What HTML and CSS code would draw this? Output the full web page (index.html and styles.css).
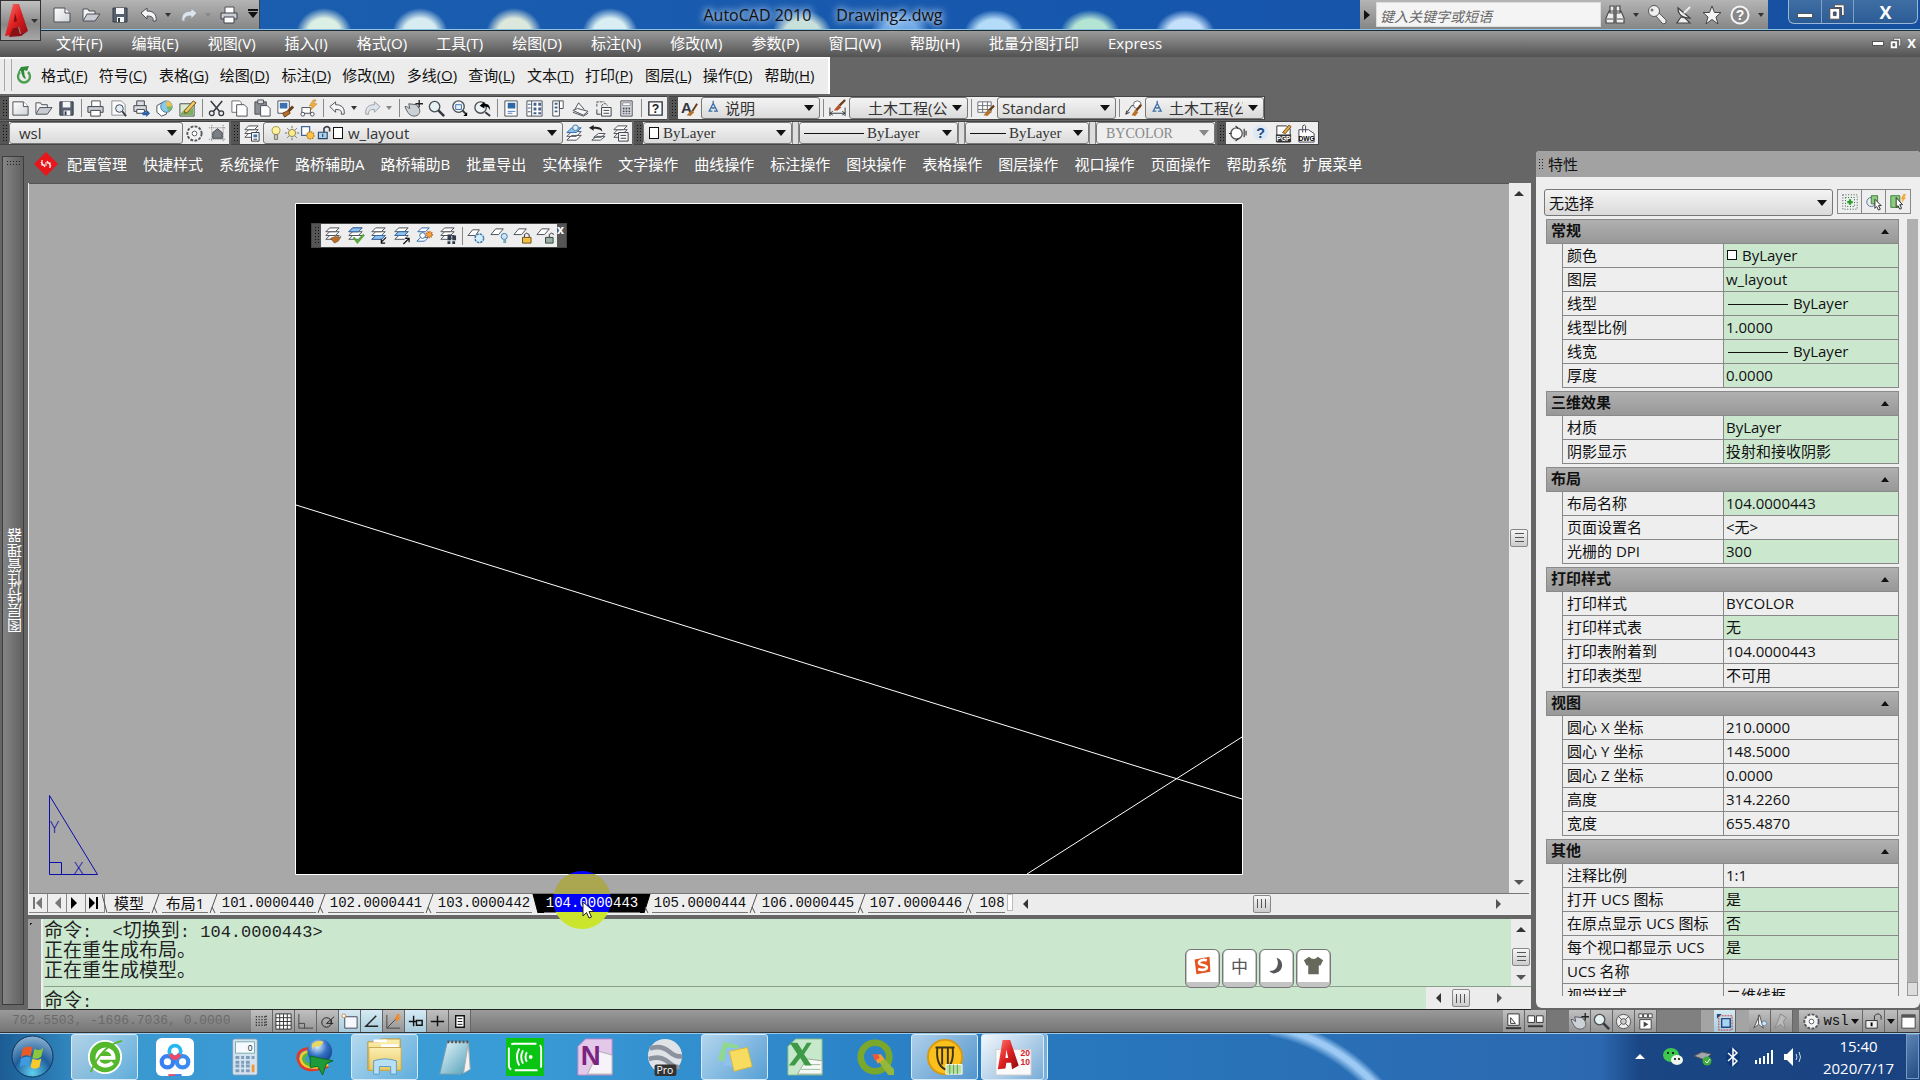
FILE: index.html
```html
<!DOCTYPE html>
<html lang="zh-CN">
<head>
<meta charset="utf-8">
<title>AutoCAD 2010 - Drawing2.dwg</title>
<link rel="stylesheet" href="styles.css">
</head>
<body>
<svg class="defs" aria-hidden="true">
<defs>
<linearGradient id="gRed" x1="0" y1="0" x2="1" y2="1"><stop offset="0" stop-color="#ff7a70"/><stop offset=".5" stop-color="#dd1f22"/><stop offset="1" stop-color="#8d0c10"/></linearGradient>
<linearGradient id="gPaper" x1="0" y1="0" x2="1" y2="1"><stop offset="0" stop-color="#fff"/><stop offset="1" stop-color="#cfd3d8"/></linearGradient>
<radialGradient id="gOrb" cx=".5" cy=".9" r=".9"><stop offset="0" stop-color="#5fd0f0"/><stop offset=".5" stop-color="#1f5f9c"/><stop offset="1" stop-color="#8fb4d2"/></radialGradient>
<radialGradient id="gGlobe" cx=".4" cy=".3" r=".8"><stop offset="0" stop-color="#dff0ff"/><stop offset=".5" stop-color="#2f6fc4"/><stop offset="1" stop-color="#123a80"/></radialGradient>
<linearGradient id="gFolder" x1="0" y1="0" x2="0" y2="1"><stop offset="0" stop-color="#fbeeb0"/><stop offset="1" stop-color="#e8c864"/></linearGradient>
<linearGradient id="gNote" x1="0" y1="0" x2="1" y2="1"><stop offset="0" stop-color="#e8f6fb"/><stop offset="1" stop-color="#4f9fb8"/></linearGradient>
</defs>
<symbol id="new" viewBox="0 0 20 20"><path d="M2 3h11l5 5v9H2z" fill="url(#gPaper)" stroke="#4a4e56"/><path d="M13 3v5h5" fill="#fff" stroke="#4a4e56"/></symbol>
<symbol id="open" viewBox="0 0 20 20"><path d="M2 15V4h5l1 2h6v3" fill="#f4f4f4" stroke="#4a4e56"/><path d="M2 16 6 9h13l-5 7z" fill="#c9ccd2" stroke="#4a4e56"/></symbol>
<symbol id="save" viewBox="0 0 20 20"><path d="M3 3h14v14H3z" fill="#56606e" stroke="#333a44"/><path d="M6 3h8v6H6zM7 12h7v5H7z" fill="#f4f6f8"/><path d="M8 13h2v4H8z" fill="#333a44"/></symbol>
<symbol id="print" viewBox="0 0 20 20"><path d="M6 8V2h9v6" fill="#fff" stroke="#4a4e56"/><path d="M2 8h16v6H2z" fill="#c9ccd2" stroke="#3c4048"/><path d="M5 12h10v6H5z" fill="#fff" stroke="#3c4048"/></symbol>
<symbol id="undo" viewBox="0 0 20 20"><path d="M2 8 8 3v3c6 0 10 3 9 10h-3c1-4-2-5-6-5v3z" fill="#f5f5f5" stroke="#4a4e56"/></symbol>
<symbol id="redo" viewBox="0 0 20 20"><path d="M18 8l-6-5v3C6 6 2 9 3 16h3c-1-4 2-5 6-5v3z" fill="#dde3ea" stroke="#9a9fa8"/></symbol>
<symbol id="preview" viewBox="0 0 20 20"><path d="M3 2h10l4 4v11H3z" fill="#fafafa" stroke="#8a8e94"/><circle cx="11" cy="10" r="4" fill="#e4eef6" stroke="#3c4048"/><path d="m14 13 4 5" stroke="#3c4048" stroke-width="2"/></symbol>
<symbol id="plot" viewBox="0 0 20 20"><path d="M5 7V2h8v5M2 7h13v6H2z" fill="#dadde2" stroke="#3c4048"/><path d="M5 11h8v4H5z" fill="#fff" stroke="#3c4048"/><path d="M11 14h4v-3l4 4-4 4v-2h-4z" fill="#2a5fa8"/></symbol>
<symbol id="web" viewBox="0 0 20 20"><path d="M2 7 9 3l3 3v10l-5 2-5-4z" fill="#fff" stroke="#4a4e56"/><circle cx="12" cy="8" r="6" fill="#8cc9e8" stroke="#4a7a9a"/><path d="M12 2a6 6 0 0 1 6 6h-6z" fill="#f2c14a"/><path d="M12 8h6a6 6 0 0 1-4 5z" fill="#7bb85a"/></symbol>
<symbol id="markup" viewBox="0 0 20 20"><path d="M2 5h15v13H2z" fill="#dcebd0" stroke="#4a4e56"/><path d="M3 15l5-5 3 3 5-4v8H3z" fill="#7fae60"/><path d="M7 12 16 2l3 2-9 10-3 1z" fill="#f0c860" stroke="#6b5020"/></symbol>
<symbol id="cut" viewBox="0 0 20 20"><path d="m4 2 9 11M16 2 7 13" stroke="#33373f" stroke-width="1.6"/><circle cx="5" cy="15" r="2.5" fill="none" stroke="#33373f" stroke-width="1.3"/><circle cx="15" cy="15" r="2.5" fill="none" stroke="#33373f" stroke-width="1.3"/></symbol>
<symbol id="copy" viewBox="0 0 20 20"><path d="M2 2h8l2 2v10H2z" fill="#fff" stroke="#6a6e74"/><path d="M7 6h8l3 3v9H7z" fill="#fff" stroke="#4a4e56"/></symbol>
<symbol id="paste" viewBox="0 0 20 20"><path d="M2 3h12v13H2z" fill="#8a8e94" stroke="#4a4e56"/><path d="M5 1h6v4H5z" fill="#ddd" stroke="#4a4e56"/><path d="M8 7h7l3 3v8H8z" fill="#fff" stroke="#4a4e56"/></symbol>
<symbol id="match" viewBox="0 0 20 20"><path d="M2 2h12v13H2z" fill="#fff" stroke="#4a4e56"/><path d="M4 4h8v6H4z" fill="#3a6fb0"/><path d="m18 8-5 5" stroke="#6b3d16" stroke-width="3"/><path d="m7 15 6-3 2 3-6 4z" fill="#b8702c" stroke="#6b3d16"/></symbol>
<symbol id="block" viewBox="0 0 20 20"><path d="M3 9h9v6H3z" fill="#fff" stroke="#4a4e56"/><circle cx="4" cy="16" r="2" fill="#fff" stroke="#4a4e56"/><circle cx="14" cy="16" r="2" fill="#fff" stroke="#4a4e56"/><path d="m15 1-4 6h3l-2 5 7-7h-4l3-4z" fill="#f6b83c" stroke="#b87818" stroke-width=".6"/></symbol>
<symbol id="hand" viewBox="0 0 20 20"><path d="M1 8c2-1 4 2 5 2l-1-5 8 1 3 4c2 4-1 8-5 8-5 0-7-3-10-10z" fill="#ccd1d6" stroke="#555a62"/><path d="M16 1v8M12 5h8" stroke="#222" stroke-width="1.4"/></symbol>
<symbol id="zoom" viewBox="0 0 20 20"><circle cx="8" cy="8" r="5.5" fill="#e4f2f2" stroke="#4a4e56" stroke-width="1.4"/><path d="m12 12 6 6" stroke="#33373f" stroke-width="2.6"/></symbol>
<symbol id="zoomw" viewBox="0 0 20 20"><circle cx="9" cy="8" r="6" fill="#eef4f6" stroke="#4a4e56" stroke-width="1.4"/><path d="M6 6h6v5H6z" fill="none" stroke="#3a6fb0"/><path d="m13 12 4 4" stroke="#33373f" stroke-width="2"/><path d="M18 14v4h-4z"/></symbol>
<symbol id="zoomp" viewBox="0 0 20 20"><circle cx="8" cy="9" r="6" fill="#eef4f6" stroke="#4a4e56" stroke-width="1.4"/><path d="m13 14 5 4" stroke="#33373f" stroke-width="2"/><path d="M7 7l5-4v2c5 0 6 3 6 7-1-3-3-4-6-4v2z"/></symbol>
<symbol id="props" viewBox="0 0 20 20"><path d="M3 2h13v16H3z" fill="#fff" stroke="#4a4e56"/><path d="M6 4h8v6H6z" fill="#2f66a8"/><path d="M6 13h8M6 15h5" stroke="#4a7ac0"/></symbol>
<symbol id="dc" viewBox="0 0 20 20"><path d="M2 2h16v16H2zM7 2v16" fill="#fff" stroke="#4a4e56"/><path d="M9 4h3v3H9zM14 4h3v3h-3zM9 9h3v3H9zM14 9h3v3h-3zM9 14h3v2H9zM14 14h3v2h-3zM3 5h3v1H3zM3 9h3v1H3zM3 13h3v1H3z" fill="#43618c"/></symbol>
<symbol id="tool" viewBox="0 0 20 20"><path d="M5 2h7v16H5zM12 2h4v8h-4z" fill="#fff" stroke="#4a4e56"/><path d="M7 4h3v2H7zM7 8h3v2H7zM7 12h3v2H7z" fill="#43618c"/></symbol>
<symbol id="sheet" viewBox="0 0 20 20"><path d="m4 11 4-7 6 7M2 12l5-2 11 3-5 4z" fill="#f6f6f6" stroke="#4a4e56"/><path d="m2 14 11 4 5-3" fill="none" stroke="#4a4e56"/></symbol>
<symbol id="mset" viewBox="0 0 20 20"><path d="M3 8V3h8M8 8c0-4 6-4 6-1" fill="none" stroke="#4a4e56" stroke-dasharray="3 1"/><path d="M8 9h10v9H8z" fill="#fff" stroke="#33373f"/><path d="M10 12h6M10 15h6M3 11v5h4" fill="none" stroke="#33373f"/></symbol>
<symbol id="calc" viewBox="0 0 20 20"><path d="M4 2h12v16H4z" fill="#e4e6ea" stroke="#4a4e56"/><path d="M6 4h8v3H6z" fill="#fff" stroke="#4a4e56" stroke-width=".6"/><path d="M6 9h2v2H6zM9 9h2v2H9zM12 9h2v2h-2zM6 12h2v2H6zM9 12h2v2H9zM12 12h2v2h-2zM6 15h2v1H6zM9 15h2v1H9zM12 15h2v1h-2z" fill="#4a4e56"/></symbol>
<symbol id="dstyle" viewBox="0 0 20 20"><path d="M2 9v9M18 9v9M2 15h16M5 13l-3 2 3 2M15 13l3 2-3 2" fill="none" stroke="#33373f"/><path d="m18 1-6 6" stroke="#6b3d16" stroke-width="2.4"/><path d="m6 12 5-6 3 3-4 3z" fill="#b8502c"/></symbol>
<symbol id="tbstyle" viewBox="0 0 20 20"><path d="M2 3h14v11H2zM2 7h14M2 11h14M7 3v11M12 3v11" fill="#fff" stroke="#6a6e74"/><path d="m19 7-5 5" stroke="#6b3d16" stroke-width="2.4"/><path d="m8 17 5-6 3 3-4 4z" fill="#b8702c"/></symbol>
<symbol id="mstyle" viewBox="0 0 20 20"><path d="m2 16 6-9M2 16l1-4M2 16l4-2M8 7h3" fill="none" stroke="#33373f"/><circle cx="14" cy="6" r="4" fill="#fff" stroke="#6a6e74"/><path d="m18 6-5 6" stroke="#6b3d16" stroke-width="2.4"/><path d="m8 17 4-6 3 3-3 4z" fill="#b8702c"/></symbol>
<symbol id="comp" viewBox="0 0 20 20"><path d="M9 1v3M9 4 4 14h4M9 4l5 10h-4M7 10h4" fill="none" stroke="#3a6fa8" stroke-width="1.6"/></symbol>
<symbol id="gear" viewBox="0 0 20 20"><circle cx="10" cy="10" r="7.500" fill="#f2f2f2" stroke="#555a62" stroke-width="2" stroke-dasharray="3 1.4"/><circle cx="10" cy="10" r="2.5" fill="#fff" stroke="#555a62"/></symbol>
<symbol id="wsset" viewBox="0 0 20 20"><path d="M1 4h18M1 16h18M4 1v18M16 1v18" stroke="#777" stroke-dasharray="1 1"/><path d="M5 15v-6l5-4 5 4v6z" fill="#7a7e86" stroke="#44484e"/></symbol>
<symbol id="layers" viewBox="0 0 20 20"><path d="M3 14h10l4-4H7z" fill="#fff" stroke="#4a4e56"/><path d="M3 10h10l4-4H7z" fill="#fff" stroke="#4a4e56"/><path d="M3 6h10l4-4H7z" fill="#fff" stroke="#4a4e56"/></symbol>
<symbol id="laymgr" viewBox="0 0 20 20"><use href="#layers"/><path d="M10 9h8v9h-8z" fill="#fff" stroke="#33373f"/><path d="M12 11h4v3h-4z" fill="#3a6fb0"/><path d="M12 16h4" stroke="#33373f"/></symbol>
<symbol id="laycur" viewBox="0 0 20 20"><path d="M2 17h10l5-5H7zM2 13h10l5-5H7z" fill="#fff" stroke="#4a4e56"/><path d="M2 9h10l5-5H7z" fill="#8fc3ee" stroke="#2f66a8"/><circle cx="11" cy="4" r="3" fill="#d8eaf8" stroke="#3a7a9a"/></symbol>
<symbol id="layprev" viewBox="0 0 20 20"><path d="M4 17h9l5-4H9zM6 14h8l4-4h-7z" fill="#fff" stroke="#4a4e56"/><path d="M1 4l5-3v2c6 0 9 1 9 5-2-2-4-3-9-3v2z" fill="#222"/></symbol>
<symbol id="laystate" viewBox="0 0 20 20"><use href="#layers"/><path d="M8 9h10v9H8z" fill="#fff" stroke="#33373f"/><path d="M10 12h6M10 15h6" stroke="#33373f"/></symbol>
<symbol id="laybrush" viewBox="0 0 20 20"><use href="#layers"/><path d="m8 13 5-2 4 1 2-1-3 5-4 2z" fill="#b8702c" stroke="#6b3d16" stroke-width=".6"/></symbol>
<symbol id="laycheck" viewBox="0 0 20 20"><use href="#layers"/><path d="M3 6h10l4-4H7z" fill="#8fc3ee" stroke="#2f66a8"/><path d="m8 12 4 5 7-8" fill="none" stroke="#58a83c" stroke-width="2.4"/></symbol>
<symbol id="layin" viewBox="0 0 20 20"><use href="#layers"/><path d="M3 14h10l4-4H7z" fill="#8fc3ee" stroke="#2f66a8"/><path d="m18 12-5 5M13 14v4h4" fill="none" stroke="#111" stroke-width="1.3"/></symbol>
<symbol id="layout" viewBox="0 0 20 20"><use href="#layers"/><path d="M3 10h10l4-4H7z" fill="#8fc3ee" stroke="#2f66a8"/><path d="m12 19 6-6M14 13h4v4" fill="none" stroke="#111" stroke-width="1.3"/></symbol>
<symbol id="laysun" viewBox="0 0 20 20"><path d="M2 16h8l4-4H6zM3 6h8l4-4H7z" fill="#fff" stroke="#2f66a8"/><circle cx="8" cy="10" r="3" fill="#fff" stroke="#2f66a8"/><circle cx="15" cy="9" r="3" fill="#f6a83c" stroke="#b8602c" stroke-dasharray="1 1" stroke-width="2"/></symbol>
<symbol id="laywalk" viewBox="0 0 20 20"><use href="#layers"/><path d="M10 9h4v6h-4zM15 10h4v5h-4zM10 16h3v3h-3zM15 16h3v3h-3z" fill="#2f3b4c"/></symbol>
<symbol id="layfrz" viewBox="0 0 20 20"><path d="M1 10h8l4-6H6z" fill="#fff" stroke="#4a4e56"/><circle cx="13" cy="13" r="4.5" fill="#d8eefc" stroke="#3a7ab0" stroke-width="1.6" stroke-dasharray="2.5 1"/></symbol>
<symbol id="layoff" viewBox="0 0 20 20"><path d="M1 9h8l5-6H6z" fill="#fff" stroke="#4a4e56"/><circle cx="15" cy="11" r="3.2" fill="#cfe4f8" stroke="#3a7ab0"/><path d="M14 14h3v4h-3z" fill="#7aa" /></symbol>
<symbol id="laylock" viewBox="0 0 20 20"><path d="M1 9h8l5-6H6z" fill="#fff" stroke="#4a4e56"/><path d="M12 12V9q2-3 5 0v3" fill="none" stroke="#333"/><path d="M10 12h9v6h-9z" fill="#f0c040" stroke="#6b5020"/></symbol>
<symbol id="layunl" viewBox="0 0 20 20"><path d="M1 9h8l5-6H6z" fill="#fff" stroke="#4a4e56"/><path d="M14 12V9q2-3 5 0" fill="none" stroke="#333"/><path d="M10 12h8v6h-8z" fill="#9ab0a4" stroke="#33433c"/></symbol>
<symbol id="bulb" viewBox="0 0 20 20"><circle cx="10" cy="7" r="5" fill="#fdf3a0" stroke="#9a8430"/><path d="M8 12h4v6H8z" fill="#c8c8b0" stroke="#666"/></symbol>
<symbol id="sun" viewBox="0 0 20 20"><circle cx="10" cy="10" r="4.5" fill="#fbe98a" stroke="#77703a"/><path d="M10 1v3M10 16v3M1 10h3M16 10h3M4 4l2 2M14 14l2 2M16 4l-2 2M6 14l-2 2" stroke="#555"/></symbol>
<symbol id="vpfrz" viewBox="0 0 20 20"><path d="M2 2h10v11H2z" fill="#fff" stroke="#44659a" stroke-width="1.6"/><circle cx="13" cy="13" r="4.5" fill="#fbc34a" stroke="#b87818" stroke-dasharray="2 1" stroke-width="1.5"/></symbol>
<symbol id="unlock" viewBox="0 0 20 20"><path d="M10 9V4q4-4 7 0v4" fill="none" stroke="#333a44" stroke-width="2"/><path d="M3 9h11v8H3z" fill="#a8d4f4" stroke="#2a4460" stroke-width="1.4"/><path d="M8 11h1v4H8z"/></symbol>
<symbol id="binoc" viewBox="0 0 20 20"><path d="M5 1h4v7H5zM11 1h4v7h-4zM4 6h5v12H1v-5zM11 6h5l3 7v5h-8z" fill="#eee" stroke="#4a4a4a" stroke-width="1.2"/><path d="M2 14h6M12 14h6" stroke="#4a4a4a"/></symbol>
<symbol id="key" viewBox="0 0 20 20"><path d="m8 10 8 9 3-1v-3l-8-8z" fill="#f0f0f0" stroke="#555"/><circle cx="7" cy="6" r="5.500" fill="#f0f0f0" stroke="#555"/><circle cx="5" cy="5" r="1.5" fill="#777"/></symbol>
<symbol id="dish" viewBox="0 0 20 20"><path d="M4 3c0 7 5 10 12 10z" fill="#f0f0f0" stroke="#444" stroke-width="1.3"/><path d="m10 8 6-6" fill="none" stroke="#eee" stroke-width="2"/><path d="M7 12l-4 6h13l-5-5z" fill="#eee" stroke="#444" stroke-width="1.2"/></symbol>
<symbol id="star" viewBox="0 0 20 20"><path d="m10 1 2.5 6.500H19l-5 4.500 2 7-6-4.500L4 19l2-7-5-4.500h6.500z" fill="#f4f4f4" stroke="#444"/></symbol>
<symbol id="restore" viewBox="0 0 20 20"><path d="M7 2h11v12h-3V5H7zM2 6h11v12H2zm4 4v4h3v-4z" fill="#fff" stroke="#444" fill-rule="evenodd"/></symbol>
<symbol id="lisp" viewBox="0 0 20 20"><circle cx="9" cy="10" r="6" fill="#fff" stroke="#555" stroke-width="1.4"/><path d="M1 10h3M8 2l3 3M17 5v9M19 7v5M8 18l3-3" stroke="#333" stroke-width="1.2"/></symbol>
<symbol id="cursor" viewBox="0 0 12 18"><path d="M1 1v14l3.500-3.500L7 17l2.500-1L7 10.500h5z" fill="#fff" stroke="#222"/></symbol>
</svg>

<div class="app">
<header class="title">
  <button class="appbtn" aria-label="应用程序菜单"><svg viewBox="0 0 40 40"><path d="M12 3h6l9 27-7 3-2-7-6 1-1 7-7 1z" fill="url(#gRed)"/><path d="m14 12 2 8-3 1z" fill="#7a0c10"/><path d="M12 27l5-1 2 7 8-3-7 5-12 1z" fill="#8a1014"/><path d="M30 18h7l-3.500 4z" fill="#333"/></svg></button>
  <div class="qat">
    <button aria-label="新建"><svg><use href="#new"/></svg></button><button aria-label="打开"><svg><use href="#open"/></svg></button><button aria-label="保存"><svg><use href="#save"/></svg></button><button aria-label="放弃"><svg><use href="#undo"/></svg></button><i class="dd"></i><button aria-label="重做"><svg><use href="#redo"/></svg></button><i class="dd dim"></i><button aria-label="打印"><svg><use href="#print"/></svg></button><i class="dd bar"></i>
  </div>
  <h1><span>AutoCAD 2010</span><span>Drawing2.dwg</span></h1>
  <div class="info">
    <i class="play"></i><input type="text" aria-label="搜索" placeholder="键入关键字或短语">
    <div class="infoicons"><svg><use href="#binoc"/></svg><i class="dd"></i><svg><use href="#key"/></svg><svg><use href="#dish"/></svg><svg><use href="#star"/></svg><svg viewBox="0 0 20 20"><circle cx="10" cy="10" r="8.500" fill="#888" stroke="#f4f4f4" stroke-width="2"/><text x="10" y="15" text-anchor="middle" font-size="14" font-weight="bold" font-family="Liberation Sans" fill="#fff">?</text></svg><i class="dd"></i></div>
  </div>
  <div class="winbtns"><button aria-label="最小化"><i class="minus"></i></button><button aria-label="还原"><svg><use href="#restore"/></svg></button><button aria-label="关闭" class="close">X</button></div>
</header>

<nav class="menubar">
  <a href="#">文件(F)</a><a href="#">编辑(E)</a><a href="#">视图(V)</a><a href="#">插入(I)</a><a href="#">格式(O)</a><a href="#">工具(T)</a><a href="#">绘图(D)</a><a href="#">标注(N)</a><a href="#">修改(M)</a><a href="#">参数(P)</a><a href="#">窗口(W)</a><a href="#">帮助(H)</a><a href="#">批量分图打印</a><a href="#">Express</a>
  <div class="docbtns"><i class="minus"></i><svg><use href="#restore"/></svg><b>X</b></div>
</nav>

<nav class="plugbar">
  <i class="rail"></i>
  <svg class="pluglogo" viewBox="0 0 18 20"><path d="M13 7a6 6 0 1 1-8 0" fill="none" stroke="#4f9f53" stroke-width="2.400"/><path d="M6 2l8-1-2 5-3-1q0 5 2 9-4-1-5-8l-3 1z" fill="#2f8a3a"/></svg>
  <a href="#">格式(<u>F</u>)</a><a href="#">符号(<u>C</u>)</a><a href="#">表格(<u>G</u>)</a><a href="#">绘图(<u>D</u>)</a><a href="#">标注(<u>D</u>)</a><a href="#">修改(<u>M</u>)</a><a href="#">多线(<u>O</u>)</a><a href="#">查询(<u>L</u>)</a><a href="#">文本(<u>T</u>)</a><a href="#">打印(<u>P</u>)</a><a href="#">图层(<u>L</u>)</a><a href="#">操作(<u>D</u>)</a><a href="#">帮助(<u>H</u>)</a>
</nav>

<div class="toolrow">
  <div class="tb"><i class="grip"></i><button><svg><use href="#new"/></svg></button><button><svg><use href="#open"/></svg></button><button><svg><use href="#save"/></svg></button><i class="sep"></i><button><svg><use href="#print"/></svg></button><button><svg><use href="#preview"/></svg></button><button><svg><use href="#plot"/></svg></button><button><svg><use href="#web"/></svg></button><button><svg><use href="#markup"/></svg></button><i class="sep"></i><button><svg><use href="#cut"/></svg></button><button><svg><use href="#copy"/></svg></button><button><svg><use href="#paste"/></svg></button><button><svg><use href="#match"/></svg></button><button><svg><use href="#block"/></svg></button><i class="sep"></i><button><svg><use href="#undo"/></svg></button><i class="dd"></i><button><svg><use href="#redo"/></svg></button><i class="dd dim"></i><i class="sep"></i><button><svg><use href="#hand"/></svg></button><button><svg><use href="#zoom"/></svg></button><button><svg><use href="#zoomw"/></svg></button><button><svg><use href="#zoomp"/></svg></button><i class="sep"></i><button><svg><use href="#props"/></svg></button><button><svg><use href="#dc"/></svg></button><button><svg><use href="#tool"/></svg></button><button><svg><use href="#sheet"/></svg></button><button><svg><use href="#mset"/></svg></button><button><svg><use href="#calc"/></svg></button><i class="sep"></i><button><svg viewBox="0 0 20 20"><path d="M3 3h14v14H3z" fill="#fff" stroke="#33373f" stroke-width="1.5"/><text x="10" y="15" text-anchor="middle" font-size="13" font-weight="bold" font-family="Liberation Sans" fill="#222">?</text></svg></button></div>
  <div class="tb"><i class="grip"></i><button><svg viewBox="0 0 20 20"><text x="1" y="15" font-size="16" font-weight="bold" font-family="Liberation Sans" fill="#33373f">A</text><path d="m18 5-5 8" stroke="#6b3d16" stroke-width="2"/><path d="m7 17 5-5 3 2-4 4z" fill="#b8702c"/></svg></button><div class="combo w120"><svg><use href="#comp"/></svg><select aria-label="文字样式"><option>说明</option></select></div><i class="sep"></i><button><svg><use href="#dstyle"/></svg></button><div class="combo w120 in"><select aria-label="标注样式"><option>土木工程(公制)</option></select></div><i class="sep"></i><button><svg><use href="#tbstyle"/></svg></button><div class="combo w120"><select aria-label="表格样式"><option>Standard</option></select></div><i class="sep"></i><button><svg><use href="#mstyle"/></svg></button><div class="combo w120"><svg><use href="#comp"/></svg><select aria-label="多重引线样式"><option>土木工程(公制)</option></select></div></div>
</div>
<div class="toolrow second">
  <div class="tb"><i class="grip"></i><div class="combo w174"><select class="pad" aria-label="工作空间"><option>wsl</option></select></div><button><svg><use href="#gear"/></svg></button><button><svg><use href="#wsset"/></svg></button></div>
  <div class="tb"><i class="grip"></i><button><svg><use href="#laymgr"/></svg></button><div class="combo w300 tight"><svg><use href="#bulb"/></svg><svg><use href="#sun"/></svg><svg><use href="#vpfrz"/></svg><svg><use href="#unlock"/></svg><i class="sw"></i><select aria-label="图层"><option>w_layout</option></select></div><button><svg><use href="#laycur"/></svg></button><button><svg><use href="#layprev"/></svg></button><button><svg><use href="#laystate"/></svg></button></div>
  <div class="tb serif"><i class="grip"></i><div class="combo w149"><i class="sw"></i><select aria-label="颜色"><option>ByLayer</option></select></div><i class="sep2"></i><div class="combo w160"><i class="ln60"></i><select aria-label="线型"><option>ByLayer</option></select></div><i class="sep2"></i><div class="combo w124"><i class="ln36"></i><select aria-label="线宽"><option>ByLayer</option></select></div><i class="sep2"></i><div class="combo w120 off"><select disabled aria-label="打印样式"><option>BYCOLOR</option></select></div></div>
  <div class="tb"><i class="grip"></i><button><svg><use href="#lisp"/></svg></button><button><svg viewBox="0 0 20 20"><circle cx="10" cy="9" r="8" fill="#dce8f4"/><text x="10" y="15" text-anchor="middle" font-size="15" font-weight="bold" font-family="Liberation Sans" fill="#234a80">?</text></svg></button><button><svg viewBox="0 0 20 20"><path d="M3 2h10l4 3v14H3z" fill="#fff" stroke="#333"/><path d="M2 11h16v8H2z" fill="#333"/><text x="10" y="18" text-anchor="middle" font-size="7" font-weight="bold" font-family="Liberation Sans" fill="#fff">PGP</text><path d="m9 9 7-8 2 2-6 7z" fill="#e8a840" stroke="#6b5020"/></svg></button><button><svg viewBox="0 0 20 20"><path d="M2 6h10l6 4v9H2zM6 9V2q2-2 3 0v7" fill="#fff" stroke="#445"/><text x="10" y="18" text-anchor="middle" font-size="7" font-weight="bold" font-family="Liberation Sans">DWG</text></svg></button></div>
</div>

<div class="middle">
  <aside class="palette"><i class="dots"></i><span>图层特性管理器</span></aside>
  <div class="center">
    <nav class="custom">
      <svg viewBox="0 0 24 24"><path d="m12 0 12 12-12 12L0 12z" fill="#e8151b"/><path d="M8 8v5l5 0M7 10l4 5M16 16v-5h-5M17 14l-4-5" fill="none" stroke="#fff" stroke-width="1.200"/></svg>
      <a href="#">配置管理</a><a href="#">快捷样式</a><a href="#">系统操作</a><a href="#">路桥辅助A</a><a href="#">路桥辅助B</a><a href="#">批量导出</a><a href="#">实体操作</a><a href="#">文字操作</a><a href="#">曲线操作</a><a href="#">标注操作</a><a href="#">图块操作</a><a href="#">表格操作</a><a href="#">图层操作</a><a href="#">视口操作</a><a href="#">页面操作</a><a href="#">帮助系统</a><a href="#">扩展菜单</a>
    </nav>
    <section class="drawing">
      <div class="view">
        <div class="canvas">
          <svg viewBox="1 0 1480 711" preserveAspectRatio="xMinYMin slice">
            <path d="M267.500 19.500h947v671h-947z" fill="#000" stroke="#fff"/>
            <path d="m268 321 946 294M999 690l215-137" stroke="#fff" fill="none"/>
            <path d="M21.500 611.500v79h48zM21.500 678.500h12v12" stroke="#0d0dab" fill="none"/>
            <g fill="#0d0dab" font-family="Open Sans" font-weight="300" font-size="17"><text x="22" y="649">Y</text><text x="46" y="690">X</text></g>
          </svg>
          <div class="floatbar"><i class="grip"></i><button><svg><use href="#laybrush"/></svg></button><button><svg><use href="#laycheck"/></svg></button><button><svg><use href="#layin"/></svg></button><button><svg><use href="#layout"/></svg></button><button><svg><use href="#laysun"/></svg></button><button><svg><use href="#laywalk"/></svg></button><i class="sep"></i><button><svg><use href="#layfrz"/></svg></button><button><svg><use href="#layoff"/></svg></button><button><svg><use href="#laylock"/></svg></button><button><svg><use href="#layunl"/></svg></button><b>x</b></div>
        </div>
        <div class="vscroll"><i class="up"></i><i class="thumb v"></i><i class="down"></i></div>
      </div>
      <div class="tabrow">
        <div class="nav"><button aria-label="第一个"><svg viewBox="0 0 18 18"><path d="M5 3v12" stroke="#777" stroke-width="2"/><path d="M13 3v12L7 9z" fill="#777"/></svg></button><button aria-label="上一个"><svg viewBox="0 0 18 18"><path d="M13 3v12L7 9z" fill="#777"/></svg></button><button aria-label="下一个"><svg viewBox="0 0 18 18"><path d="M4 3v12l6-6z"/></svg></button><button aria-label="最后一个"><svg viewBox="0 0 18 18"><path d="M3 3v12l6-6z"/><path d="M11 3v12" stroke="#000" stroke-width="2"/></svg></button></div>
        <div class="tabs">
          <svg class="sl first"><path d="m0 0 5 19"/></svg><button class="t1">模型</button><svg class="sl"><path d="M9 0 2 19M4 13l3 6"/></svg><button class="t2">布局1</button><svg class="sl"><path d="M9 0 2 19M4 13l3 6"/></svg><button>101.0000440</button><svg class="sl"><path d="M9 0 2 19M4 13l3 6"/></svg><button>102.0000441</button><svg class="sl"><path d="M9 0 2 19M4 13l3 6"/></svg><button>103.0000442</button><svg class="sl"><path d="M1 0h11v19H6z" class="blk"/></svg><button class="on"><span>104.0000443</span></button><svg class="sl"><path d="M0 0h10L4 19H0z" class="blk"/><path d="M5 13l3 6"/></svg><button>105.0000444</button><svg class="sl"><path d="M9 0 2 19M4 13l3 6"/></svg><button>106.0000445</button><svg class="sl"><path d="M9 0 2 19M4 13l3 6"/></svg><button>107.0000446</button><svg class="sl"><path d="M9 0 2 19M4 13l3 6"/></svg><button class="part">108</button>
        </div>
        <i class="split"></i>
        <div class="hscroll"><i class="left"></i><i class="thumb h"></i><i class="right"></i></div>
        <svg class="glow" viewBox="0 0 60 60"><defs><clipPath id="c"><circle cx="30" cy="30" r="29"/></clipPath></defs><g clip-path="url(#c)"><path d="M0 0h60v4H0z" fill="#00f"/><path d="M0 4h60v20H0z" fill="#aba650"/><path d="M0 24h60v18H0z" fill="#00f"/><path d="M0 42h60v18H0z" fill="#cbe52c"/></g></svg>
        <svg class="pointer"><use href="#cursor"/></svg>
      </div>
    </section>
    <section class="cmd">
      <i class="cmdgrip"></i>
      <div class="cmdmain">
        <div class="log">
          <div class="lines"><p>命令<kbd>:  &lt;</kbd>切换到<kbd>: 104.0000443&gt;</kbd></p><p>正在重生成布局。</p><p>正在重生成模型。</p></div>
          <div class="vscroll"><i class="up"></i><i class="thumb v"></i><i class="down"></i></div>
        </div>
        <div class="entry"><label for="cmd">命令<kbd>:</kbd></label><input id="cmd" type="text"><div class="hscroll"><i class="left"></i><i class="thumb h"></i><i class="right"></i></div></div>
      </div>
      <div class="ime">
        <button aria-label="搜狗输入法"><svg viewBox="0 0 24 24"><path d="m3 5 17-3 1 17-16 3z" fill="#e4541f"/><path d="M17 6c-4-1-9 0-9 3s9 2 9 5-6 4-10 2" fill="none" stroke="#fff" stroke-width="3"/></svg></button><button>中</button><button aria-label="半角"><svg viewBox="0 0 24 24"><path d="M12 3c9 2 9 17-3 18-2 0-4-1-5-3 8 1 12-8 8-15z" fill="#55575a"/></svg></button><button aria-label="皮肤"><svg viewBox="0 0 24 24"><path d="M7 2q5 5 10 0l6 4-3 6h-2v10H6V12H4L1 6z" fill="#66685c"/></svg></button>
      </div>
    </section>
  </div>
  <aside class="props">
    <h2><i class="dots"></i>特性</h2>
    <div class="pick"><div class="combo"><select aria-label="选择对象"><option>无选择</option></select></div><div class="pickbtns">
      <button aria-label="切换 PICKADD"><svg viewBox="0 0 20 20"><path d="M2 2h16v16H2z" fill="#e8f2e8" stroke="#334" stroke-dasharray="1 2"/><path d="M5 5h10v10H5z" fill="none" stroke="#334" stroke-dasharray="1 2"/><path d="M10 7v6M7 10h6" stroke="#2c9a2c" stroke-width="2.500"/></svg></button><button aria-label="选择对象"><svg viewBox="0 0 20 20"><circle cx="7" cy="10" r="5" fill="none" stroke="#4a6a9a"/><path d="M7 3h7v9H7z" fill="#8ccc7c" stroke="#3c7a3c"/><path d="M11 7v10l2-2 2 4 2-1-2-4h3z" fill="#fff" stroke="#222"/></svg></button><button aria-label="快速选择"><svg viewBox="0 0 20 20"><path d="M2 3h10v13H2z" fill="#8ccc7c" stroke="#3c7a3c"/><path d="M8 5v11l2-2 2 4 2-1-2-4h3z" fill="#fff" stroke="#222"/><path d="m16 1-3 6h2l-1 4 5-6h-2l2-4z" fill="#f6a83c"/></svg></button></div></div>
    <div class="plist">
      <div class="sections">
        <h3>常规</h3>
        <table><tr><th>颜色</th><td class="g"><i class="sw"></i>ByLayer</td></tr><tr><th>图层</th><td class="g">w_layout</td></tr><tr><th>线型</th><td class="g"><i class="ln60"></i>ByLayer</td></tr><tr><th>线型比例</th><td class="g">1.0000</td></tr><tr><th>线宽</th><td class="g"><i class="ln60"></i>ByLayer</td></tr><tr><th>厚度</th><td class="g">0.0000</td></tr></table>
        <h3>三维效果</h3>
        <table><tr><th>材质</th><td class="g">ByLayer</td></tr><tr><th>阴影显示</th><td class="g">投射和接收阴影</td></tr></table>
        <h3>布局</h3>
        <table><tr><th>布局名称</th><td class="g">104.0000443</td></tr><tr><th>页面设置名</th><td>&lt;无&gt;</td></tr><tr><th>光栅的 DPI</th><td class="g">300</td></tr></table>
        <h3>打印样式</h3>
        <table><tr><th>打印样式</th><td>BYCOLOR</td></tr><tr><th>打印样式表</th><td class="g">无</td></tr><tr><th>打印表附着到</th><td>104.0000443</td></tr><tr><th>打印表类型</th><td>不可用</td></tr></table>
        <h3>视图</h3>
        <table><tr><th>圆心 X 坐标</th><td>210.0000</td></tr><tr><th>圆心 Y 坐标</th><td>148.5000</td></tr><tr><th>圆心 Z 坐标</th><td>0.0000</td></tr><tr><th>高度</th><td>314.2260</td></tr><tr><th>宽度</th><td>655.4870</td></tr></table>
        <h3>其他</h3>
        <table><tr><th>注释比例</th><td>1:1</td></tr><tr><th>打开 UCS 图标</th><td class="g">是</td></tr><tr><th>在原点显示 UCS 图标</th><td class="g">否</td></tr><tr><th>每个视口都显示 UCS</th><td class="g">是</td></tr><tr><th>UCS 名称</th><td></td></tr><tr><th>视觉样式</th><td>二维线框</td></tr></table>
      </div>
      <div class="ptrack"><i></i></div>
    </div>
  </aside>
</div>

<footer class="status">
  <output>702.5503, -1696.7036, 0.0000</output>
  <div class="sbtns">
    <button><svg viewBox="0 0 20 20"><path d="M4 5h10M4 8h10M4 11h10M4 14h10M15 4v12" stroke="#111" stroke-width="1.500" stroke-dasharray="1 2"/></svg></button><button><svg viewBox="0 0 20 20"><path d="M2 2h16v16H2zM6 2v16M10 2v16M14 2v16M2 6h16M2 10h16M2 14h16" fill="#fff" stroke="#333"/></svg></button><button><svg viewBox="0 0 20 20"><path d="M3 2v15h15M3 12h6v5" fill="none" stroke="#444"/></svg></button><button><svg viewBox="0 0 20 20"><circle cx="9" cy="11" r="5" fill="none" stroke="#222"/><path d="M9 12h7M9 12l8-7M14 8v5" fill="none" stroke="#222"/></svg></button><button class="lit"><svg viewBox="0 0 20 20"><path d="M5 5h13v12H5z" fill="#f4f8fc" stroke="#445"/><circle cx="4" cy="4" r="2" fill="#fff" stroke="#c84"/></svg></button><button class="lit"><svg viewBox="0 0 20 20"><path d="M15 4 4 15h13" fill="none" stroke="#222" stroke-width="1.500"/></svg></button><button><svg viewBox="0 0 20 20"><path d="M3 3v14h14M3 17 13 7" fill="none" stroke="#444"/><path d="m14 2-3 6h2l-1 4 6-7h-3l2-3z" fill="#f08a2c"/></svg></button><button class="lit"><svg viewBox="0 0 20 20"><path d="M8 4v11M3 10h8M11 9h6v5h-6z" fill="none" stroke="#111" stroke-width="1.500"/></svg></button><button><svg viewBox="0 0 20 20"><path d="M10 4v11M3 10h14" stroke="#111" stroke-width="1.500"/></svg></button><button><svg viewBox="0 0 20 20"><path d="M6 4h9v12H6z" fill="#fff" stroke="#111" stroke-width="1.500"/><path d="M8 7h5M8 10h5M8 13h5" stroke="#111"/></svg></button>
  </div>
  <div class="sright">
    <button><svg viewBox="0 0 20 20"><path d="M4 2h12v12H4z" fill="#fff" stroke="#333"/><path d="M7 6v6h5z" fill="none" stroke="#333"/><path d="M2 17h16" stroke="#333" stroke-width="2"/></svg></button><button><svg viewBox="0 0 20 20"><path d="M2 4h7v7H2zM11 4h7v7h-7z" fill="#fff" stroke="#333"/><path d="M2 15h16" stroke="#333" stroke-width="2"/></svg></button><i class="gap22"></i><button><svg><use href="#hand"/></svg></button><button><svg><use href="#zoom"/></svg></button><button><svg viewBox="0 0 20 20"><circle cx="10" cy="10" r="7.500" fill="#eee" stroke="#555"/><circle cx="10" cy="10" r="3" fill="#ccc" stroke="#555"/><path d="m4 4 4 4M16 4l-4 4M4 16l4-4M16 16l-4-4" stroke="#555"/></svg></button><button><svg viewBox="0 0 20 20"><path d="M3 2h4v4H3zM8 2h4v4H8zM13 2h4v4h-4zM4 8h12v10H4z" fill="#fff" stroke="#444"/><path d="m8 10 5 3-5 3z" fill="#444"/></svg></button><i class="gap44"></i><i class="gap14"></i><button class="lit"><svg viewBox="0 0 20 20"><path d="M7 7h9v9H7z" fill="#a8d4f4" stroke="#234a80" stroke-width="1.500"/><path d="M4 4h14v15H4z" fill="none" stroke="#c33" stroke-dasharray="2 1"/><path d="M2 2h5L2 7z" fill="#234a80"/></svg></button><i class="gap14"></i><button><svg viewBox="0 0 20 20"><path d="m10 3-6 14 5-4 5 4zM9 3v10" fill="#f4f4f4" stroke="#555"/><circle cx="15" cy="12" r="2.500" fill="#cfe4f4" stroke="#68a"/></svg></button><button><svg viewBox="0 0 20 20"><path d="m9 2-3 8-3 7 6-4 5 5-2-8 3-4z" fill="#bbb" stroke="#888"/></svg></button><i class="gap6"></i><button class="ws"><svg><use href="#gear"/></svg>wsl<i class="dd bk"></i></button><button><svg viewBox="0 0 20 20"><path d="M11 9V4q4-4 7 0v4" fill="none" stroke="#333"/><path d="M2 9h12v8H2z" fill="#f0f0f0" stroke="#333"/><path d="M8 11v4" stroke="#000" stroke-width="2"/></svg></button><button class="nar"><i class="dd bk"></i></button><button><svg viewBox="0 0 20 20"><path d="M3 3h14v14H3z" fill="#fff" stroke="#444"/><path d="M3 3h14v3H3z" fill="#555"/></svg></button>
  </div>
</footer>

<footer class="taskbar">
  <button class="task start" aria-label="开始"><svg viewBox="0 0 44 44"><circle cx="22" cy="22" r="21" fill="url(#gOrb)" stroke="#0e2f55"/><path d="M12 14q5-4 10-1l-2 9q-5-3-10 1z" fill="#ea5a28"/><path d="M24 14q5 3 9-1l-2 9q-5 4-9 1z" fill="#8cc63c"/><path d="M10 24q5-3 10-1l-2 9q-5-3-9 1z" fill="#3f9ae0"/><path d="M22 24q5 3 9 0l-2 9q-5 3-9 0z" fill="#fbc92c"/></svg></button>
  <button class="task run" aria-label="360浏览器"><svg viewBox="0 0 40 40"><circle cx="20" cy="20" r="17" fill="#54b82c" stroke="#fff" stroke-width="2"/><path d="M12 21h17c0-12-17-12-17 0 0 9 11 10 16 5" fill="none" stroke="#fff" stroke-width="4"/><path d="M5 36Q16 8 38 3" stroke="#58b82c" stroke-width="2" fill="none"/></svg></button>
  <button class="task" aria-label="百度网盘"><svg viewBox="0 0 40 40"><rect width="40" height="40" rx="6" fill="#fff"/><circle cx="12" cy="25" r="6" fill="none" stroke="#3a80f0" stroke-width="4.500"/><circle cx="28" cy="25" r="6" fill="none" stroke="#3a8cf0" stroke-width="4.500"/><circle cx="20" cy="14" r="6" fill="none" stroke="#28b8f0" stroke-width="4"/><path d="M15 17q5 8 10 0" fill="none" stroke="#ec4868" stroke-width="4.500"/><path d="M13 39h7" stroke="#ec4868" stroke-width="2"/><path d="M20 39h7" stroke="#3a80f0" stroke-width="2"/></svg></button>
  <button class="task" aria-label="计算器"><svg viewBox="0 0 40 40"><rect x="7" y="1" width="26" height="38" rx="2" fill="#d4e3f0" stroke="#7a9cb8"/><path d="M10 4h20v12H10z" fill="#f4faff" stroke="#7aa"/><text x="23" y="14" font-family="Liberation Sans" font-size="9" fill="#234">0</text><path d="M10 19h4v3h-4zM16 19h3v3h-3zM21 19h4v3h-4zM27 19h3v3h-3zM10 24h4v3h-4zM16 24h3v3h-3zM21 24h4v3h-4zM10 28h4v3h-4zM16 28h3v3h-3zM21 28h4v3h-4zM10 33h4v3h-4zM16 33h3v3h-3zM21 33h4v3h-4z" fill="#7f9cb8"/><path d="M27 28h3v8h-3z" fill="#f0983c"/></svg></button>
  <button class="task" aria-label="下载管理器"><svg viewBox="0 0 40 40"><g fill="none" stroke-width="3"><path d="M34 30Q6 40 2 22 1 12 14 11" stroke="#e03a2c"/><path d="M34 28Q8 36 5 22 5 15 14 14" stroke="#f6c82c"/><path d="M33 26Q12 33 8 23 8 18 13 17" stroke="#58b83c"/></g><circle cx="25" cy="14" r="13" fill="url(#gGlobe)"/><path d="M17 6q6-5 12-2-3 6-7 5t-5 4z" fill="#e8d860"/><path d="M15 19l24 5-7 3-4 12-5-9-8 1z" fill="#1f9a3a" stroke="#0c6a22"/></svg></button>
  <button class="task run" aria-label="资源管理器"><svg viewBox="0 0 40 40"><path d="M2 4h12l2-3h20v33H2z" fill="url(#gFolder)" stroke="#b8902c"/><path d="M8 3h14M16 8h18" stroke="#fff" stroke-width="3"/><path d="M3 10h34v24H3z" fill="url(#gFolder)" stroke="#c8a84c"/><path d="M8 24q12-4 24 0v14h-6v-8H14v8H8z" fill="#b8e0f4" stroke="#5a9cc8"/></svg></button>
  <button class="task" aria-label="记事本"><svg viewBox="0 0 40 40"><path d="M12 4h22l2 28-10 6H4z" fill="url(#gNote)" stroke="#7a9cae"/><path d="m34 5 2 28-7 4z" fill="#f4f4f4" stroke="#aaa"/><path d="M12 4h22" stroke="#555" stroke-width="3" stroke-dasharray="2 2"/></svg></button>
  <button class="task" aria-label="语音工具"><svg viewBox="0 0 40 40"><path d="M0 0h40v40H0z" fill="#0ac414"/><rect x="3" y="6" width="34" height="28" rx="5" fill="none" stroke="#fff" stroke-width="2" stroke-dasharray="24 4"/><circle cx="26" cy="20" r="2" fill="#fff"/><path d="M22 15q-3 5 0 10M18 13q-4 7 0 14M14 11q-5 9 0 18" stroke="#fff" stroke-width="2" fill="none"/></svg></button>
  <button class="task" aria-label="OneNote"><svg viewBox="0 0 40 40"><path d="M10 1h28v38H2V9z" fill="#e4c8ea" stroke="#b888c8"/><path d="M24 14l14 4v20H12z" fill="#f6f4f8" stroke="#aaa"/><text x="5" y="28" font-family="Liberation Sans" font-size="29" font-weight="bold" fill="#7a2480">N</text></svg></button>
  <button class="task" aria-label="Google Earth Pro"><svg viewBox="0 0 40 40"><circle cx="20" cy="19" r="18" fill="#dfe2e6"/><path d="M4 11q12-4 20 3t14 5M3 22q12-4 20 3t12 5" stroke="#8d939e" stroke-width="5" fill="none"/><rect x="9" y="28" width="23" height="12" rx="2" fill="#333"/><text x="20" y="38" text-anchor="middle" font-family="Open Sans" font-size="11" fill="#fff">Pro</text></svg></button>
  <button class="task run" aria-label="便笺"><svg viewBox="0 0 40 40"><path d="m8 4 16 4-5 20-17-5z" fill="#8fd890"/><path d="m11 10 16 1-1 20-18-2z" fill="#8fc0f0"/><path d="m14 14 19-4 5 20-19 5z" fill="#f8dc60" stroke="#d8b83c"/></svg></button>
  <button class="task" aria-label="Excel"><svg viewBox="0 0 40 40"><path d="M10 1h28v38H2V9z" fill="#c8e8cc" stroke="#7ab888"/><path d="M22 22l16 2v14H12z" fill="#f6faf6" stroke="#9a9"/><path d="M18 28h18M16 33h20" stroke="#9b9"/><path d="M4 5h8l5 8 5-8h5l-8 12 8 12h-7l-5-8-6 8H3l9-12z" fill="#3f9a48"/></svg></button>
  <button class="task" aria-label="QGIS"><svg viewBox="0 0 40 40"><circle cx="20" cy="20" r="15" fill="none" stroke="#7aa82c" stroke-width="7"/><path d="m22 22 4-4 14 15v6h-6z" fill="#93b83c"/><path d="m18 18 8-1 4 5-7 5z" fill="#f0a030"/><path d="m17 17 6 0 2 4-5 3z" fill="#e8583c"/></svg></button>
  <button class="task run" aria-label="工具"><svg viewBox="0 0 40 40"><circle cx="20" cy="20" r="18" fill="#fbc01c" stroke="#d89810" stroke-width="2"/><path d="M10 10h20M12 10q-2 18 8 23 10-5 8-23M17 10v18M23 10v18" fill="none" stroke="#3a3318" stroke-width="2"/><path d="M21 28h17v10H21z" fill="#b8e0a0" stroke="#fff"/><path d="M25 28v10M29 28v10M33 28v10" stroke="#5a9c4c"/></svg></button>
  <button class="task run act" aria-label="AutoCAD 2010"><svg viewBox="0 0 40 40"><path d="M2 12h37v27H2z" fill="#fafafa" stroke="#ccc"/><path d="M9 2h8l9 27-7 4-1-7h-5l-1 6-8 1z" fill="url(#gRed)"/><path d="m13 12 2 9h-3z" fill="#fff"/><g font-family="Liberation Sans" font-size="9" font-weight="bold" fill="#d8222a"><text x="28" y="19">20</text><text x="28" y="28">10</text></g></svg></button>
  <div class="tray"><i class="up wh"></i>
    <svg viewBox="0 0 20 20"><ellipse cx="8" cy="8" rx="8" ry="7" fill="#3fc850"/><ellipse cx="14" cy="13" rx="6" ry="5" fill="#eef6ee"/><circle cx="5" cy="6" r="1"/><circle cx="10" cy="6" r="1"/><circle cx="12" cy="12" r="1"/><circle cx="16" cy="12" r="1"/></svg>
    <svg viewBox="0 0 20 20"><path d="m1 9 8-4 9 2-6 6z" fill="#a4a8ae" stroke="#555"/><circle cx="14" cy="14" r="4.500" fill="#3fae3c"/><path d="m12 14 2 2 3-4" stroke="#fff" fill="none"/></svg>
    <svg viewBox="0 0 20 20"><ellipse cx="10" cy="10" rx="7" ry="9.500" fill="#0c3878"/><path d="m5 6 9 8-4 4V2l4 4-9 8" fill="none" stroke="#fff" stroke-width="1.500"/></svg>
    <svg viewBox="0 0 20 20"><path d="M2 13h2v4H2zM6 11h2v6H6zM10 9h2v8h-2zM14 6h2v11h-2zM18 3h2v14h-2z" fill="#fff"/></svg>
    <svg viewBox="0 0 20 20"><path d="M1 7h3l6-6v18l-6-6H1z" fill="#fff"/><path d="M13 7q2 3 0 6M16 5q3 5 0 10" stroke="#cde" fill="none"/></svg>
    <div class="clock"><span>15:40</span><span>2020/7/17</span></div><button class="desk" aria-label="显示桌面"></button>
  </div>
</footer>
</div>
</body>
</html>
```
FILE: styles.css
```css
* { box-sizing: border-box; }
body { margin: 0; background: #666; color: #111; font: 15px/20px "Open Sans", "Noto Sans CJK SC", sans-serif; }
button { border: 0; padding: 0; margin: 0; background: none; font: inherit; color: inherit; display: flex; align-items: center; justify-content: center; }
a { color: inherit; text-decoration: none; white-space: nowrap; }
svg { display: block; flex: none; }
h1, h2, h3, p { margin: 0; font: inherit; }
i { display: block; flex: none; }
kbd { font: inherit; white-space: pre; }
.defs { position: absolute; width: 0; height: 0; }
.app { height: 100vh; display: flex; flex-direction: column; overflow: hidden; }

/* title bar */
.title { height: 31px; display: flex; align-items: flex-start; border-bottom: 1px solid #1b2a35; position: relative; z-index: 2; flex: none;
  background:
    linear-gradient(#0000 29px, #8cc4e4 29px),
    radial-gradient(ellipse 28px 26px at 324px 34px, #dcefe4 60%, #0000),
    radial-gradient(ellipse 28px 26px at 420px 34px, #d6ecf0 60%, #0000),
    radial-gradient(ellipse 28px 26px at 514px 34px, #dde8dc 60%, #0000),
    radial-gradient(ellipse 28px 26px at 610px 34px, #d8eef2 60%, #0000),
    radial-gradient(ellipse 30px 24px at 802px 34px, #c8e0d8 60%, #0000),
    radial-gradient(ellipse 30px 24px at 900px 34px, #6fa8e8 60%, #0000),
    radial-gradient(ellipse 30px 24px at 994px 34px, #b4dcf8 60%, #0000),
    radial-gradient(ellipse 30px 24px at 1090px 34px, #b4e4d4 60%, #0000),
    radial-gradient(ellipse 30px 24px at 1185px 34px, #c4e0fa 60%, #0000),
    linear-gradient(90deg, #1c5fae, #1657ae 60%, #164f9f); }
.appbtn { width: 41px; height: 41px; background: linear-gradient(#c0c0c0, #888 60%, #a8a8a8); border: 1px solid #333; flex: none; }
.appbtn svg { width: 40px; height: 40px; }
.qat { width: 219px; height: 29px; display: flex; align-items: center; gap: 9px; padding-left: 11px; background: linear-gradient(#b4b4b4, #868686); border-right: 1px solid #345; flex: none; }
.qat .dd { margin: 0 -1px 0 -3px; }
.qat svg { width: 20px; height: 20px; }
.dd { border: 3px solid transparent; border-top: 4px solid #333; border-bottom: 0; width: 6px; }
.dd.dim { border-top-color: #888; }
.qat .bar { border-width: 5px; border-top: 6px solid #111; border-bottom: 0; width: 10px; position: relative; margin-left: 0; }
.dd.bar::before { content: ""; position: absolute; left: -5px; top: -9px; width: 10px; height: 2px; background: #111; }
.dd.bk { border-width: 4px; border-top: 5px solid #111; border-bottom: 0; width: 8px; }
.title h1 { flex: 1; display: flex; justify-content: center; gap: 25px; padding: 5px 0 0 26px; font-size: 16px; line-height: 21px; text-shadow: 0 0 6px #cfe4f8, 0 0 10px #cfe4f8; white-space: nowrap; }
.info { width: 408px; height: 29px; display: flex; align-items: center; background: linear-gradient(#b4b4b4, #868686); flex: none; }
.play { margin: 0 6px 0 4px; border: 5px solid transparent; border-left: 6px solid #111; border-right: 0; }
.info input { width: 225px; height: 25px; border: 1px solid #ddd; background: #f4f4f4; font: italic 14px "Open Sans", "Noto Sans CJK SC", sans-serif; padding: 4px 3px 1px; }
.info input::placeholder { color: #666; }
.infoicons { display: flex; flex: 1; align-items: center; justify-content: space-between; padding: 0 4px; }
.infoicons svg { width: 20px; height: 20px; }
.winbtns { display: flex; height: 24px; width: 130px; margin: 0 2px 0 20px; border: 1px solid #9ab8d4; border-top: 0; border-radius: 0 0 6px 6px; background: linear-gradient(#3f6ea4, #2c5c96); color: #fff; flex: none; }
.winbtns button { flex: 1; border-right: 1px solid #7fa0c4; }
.winbtns .close { flex: 2; border: 0; font-weight: bold; font-size: 18px; }
.winbtns svg { width: 18px; height: 18px; }
.minus { width: 16px; height: 5px; background: #fff; border: 1px solid #555; }
.winbtns .minus { margin-top: 8px; }

/* menus */
.menubar { height: 26px; display: flex; align-items: center; gap: 29px; padding: 0 0 2px 56px; color: #fff; background: linear-gradient(#9a9a9a, #525252); flex: none; }
.docbtns { margin-left: auto; display: flex; gap: 5px; align-items: center; padding-right: 4px; }
.docbtns .minus { width: 12px; }
.docbtns svg { width: 13px; height: 13px; }
.docbtns b { font-size: 13px; }
.plugbar { height: 37px; width: 830px; display: flex; align-items: center; gap: 12px; background: linear-gradient(#fff, #ececec 3px); border-right: 2px solid #fff; flex: none; padding-bottom: 1px; }
.plugbar a:nth-of-type(2n) { margin-left: -1px; }
.rail { width: 8px; height: 32px; border: solid #aaa; border-width: 0 1px; margin: 0 -6px 0 4px; }
.pluglogo { width: 18px; height: 20px; margin: 0 -6px 0 -3px; }
.pluglogo + a { margin-left: 2px; }

/* toolbars */
.toolrow { display: flex; gap: 2px; height: 24px; margin-top: 2px; color: #333; flex: none; }
.toolrow.second { margin-top: 1px; }
.toolrow .tb:last-child { border-right: 1px solid #444; }
.tb { display: flex; align-items: center; background: #eee; border: solid #444; border-width: 1px 0; }
.tb button { width: 23px; height: 22px; }
.tb svg, .floatbar svg { width: 19px; height: 19px; }
.grip { width: 9px; align-self: stretch; background: radial-gradient(circle, #111 1px, #0000 1px) 0 0 / 3px 3px, #555; border: 2px solid #555; }
.sep { width: 6px; height: 18px; background: linear-gradient(90deg, #0000 3px, #888 3px 4px, #0000 4px); }
.tb .dd { margin: 0 4px 0 2px; }
.toolrow .sep2 { width: 7px; height: 22px; border: 1px solid #888; border-width: 0 1px; background: #ddd; }
.combo { position: relative; display: flex; align-items: center; gap: 3px; height: 22px; padding: 0 4px; border: 1px solid #777; border-radius: 3px; background: linear-gradient(#f4f4f4, #dadada); overflow: hidden; }
.combo.tight { gap: 0; }
.combo svg { width: 16px; height: 16px; }
.combo::after { content: ""; position: absolute; right: 5px; top: 7px; border: 5px solid transparent; border-top: 6px solid #111; border-bottom: 0; }
.combo select { appearance: none; border: 0; background: none; font: inherit; color: inherit; flex: 1; width: 0; padding: 0; margin-right: 16px; opacity: 1; }
.combo select.pad { padding-left: 5px; }
.combo.tight select { padding-left: 4px; }
.combo.in { padding-left: 18px; }
.combo.off { color: #888; background: #eee; padding-left: 9px; font-size: 14px; }
.combo.off::after { border-top-color: #888; }
.w120 { width: 119px; } .w124 { width: 124px; } .w149 { width: 149px; } .w160 { width: 159px; } .w174 { width: 174px; } .w300 { width: 300px; }
.sw { width: 10px; height: 12px; border: 1px solid #111; background: #fff; margin: 0 1px; }
.ln60 { width: 60px; height: 1px; background: #111; }
.ln36 { width: 36px; height: 1px; background: #111; }
.tb.serif { font: 15px "Liberation Serif", serif; }

/* middle */
.middle { flex: 1; display: flex; min-height: 0; }
.palette { width: 22px; margin: 11px 4px 5px 2px; padding-left: 4px; display: flex; justify-content: center; align-items: center; background: linear-gradient(90deg, #858585, #606060); border: 1px solid #3c3c3c; color: #fff; position: relative; flex: none; }
.palette span { writing-mode: vertical-rl; transform: rotate(180deg); font-size: 15px; line-height: 20px; }
.dots { background: radial-gradient(circle, #222 1px, #0000 1px) 0 0 / 3px 3px; width: 6px; height: 12px; }
.palette .dots { position: absolute; top: 3px; left: 3px; width: 14px; height: 5px; }
.center { flex: 1; min-width: 0; display: flex; flex-direction: column; margin-right: 5px; }
.custom { height: 38px; display: flex; align-items: center; gap: 16px; padding-left: 6px; color: #fff; flex: none; }
.custom svg { width: 24px; height: 24px; margin-right: -7px; }
.drawing { flex: 1; min-height: 0; display: flex; flex-direction: column; border: solid #eee; border-width: 0 2px 2px 1px; }
.view { flex: 1; min-height: 0; display: flex; }
.canvas { flex: 1; min-width: 0; position: relative; background: #a8a8a8; overflow: hidden; border-top: 1px solid #555; }
.canvas > svg { width: 100%; height: 100%; }
.floatbar { position: absolute; left: 282px; top: 39px; display: flex; height: 25px; align-items: center; background: #eee; border: 1px solid #444; }
.floatbar button { width: 23px; }
.floatbar .sep { width: 6px; }
.floatbar b { align-self: stretch; width: 9px; background: #555; color: #fff; font-size: 12px; line-height: 12px; }
.vscroll { width: 20px; background: #ececec; display: flex; flex-direction: column; align-items: center; justify-content: space-between; padding: 8px 0; flex: none; }
.up, .down { border: 5px solid transparent; border-bottom: 5px solid #333; border-top: 0; }
.down { border-top: 5px solid #555; border-bottom: 0; }
.left, .right { border: 5px solid transparent; border-right: 5px solid #333; border-left: 0; }
.right { border-left: 5px solid #555; border-right: 0; }
.thumb { width: 18px; height: 18px; border: 1px solid #888; border-radius: 2px; background: repeating-linear-gradient(#555 0 1px, #0000 1px 4px) center / 9px 10px no-repeat, linear-gradient(#f6f6f6, #ccc); }
.thumb.h { background: repeating-linear-gradient(90deg, #555 0 1px, #0000 1px 4px) center / 10px 9px no-repeat, linear-gradient(#f6f6f6, #ccc); }
.tabrow { height: 20px; display: flex; background: #eee; position: relative; border-top: 1px solid #777; flex: none; }
.nav { display: flex; width: 73px; flex: none; }
.nav button { flex: 1; border: solid #888; border-width: 0 1px 1px 0; }
.nav svg { width: 18px; height: 18px; }
.tabs { display: flex; width: 903px; flex: none; }
.tabs button { width: 96px; flex: none; font: 14px/18px "Liberation Mono", monospace; border-bottom: 1px solid #777; color: #111; }
.tabs .t1, .tabs .t2 { font: 15px/18px "Open Sans", "Noto Sans CJK SC", sans-serif; width: 42px; white-space: nowrap; }
.tabs .t2 { width: 46px; }
.tabs .part { flex: 1; padding-left: 3px; }
.tabs .on { background: #000; color: #fff; }
.tabs .on span { position: relative; z-index: 2; }
.sl { width: 12px; height: 19px; fill: none; stroke: #555; }
.sl.first { width: 6px; }
.sl .blk { fill: #000; stroke: #000; }
.hscroll { flex: 1; display: flex; align-items: center; justify-content: space-between; padding: 0 28px 0 10px; background: #ececec; }
.split { width: 6px; height: 17px; border: 1px solid #bbb; background: #fff; margin-left: 2px; }
.glow { position: absolute; left: 523px; top: -24px; width: 60px; height: 60px; z-index: 1; }
.pointer { position: absolute; left: 553px; top: 7px; width: 12px; height: 18px; z-index: 4; }

/* command window */
.cmd { position: relative; height: 91px; margin-top: 4px; display: flex; background: #cbe8cf; border-bottom: 1px solid #222; flex: none; font: 19px/20px "Noto Sans CJK SC", sans-serif; color: #222; }
.cmd kbd { font-family: "Liberation Mono", monospace; font-size: 17px; line-height: 1px; }
.cmdgrip { width: 15px; background: radial-gradient(circle, #222 1px, #0000 1px) 1px 3px / 3px 3px no-repeat, #a0a0a0; border-right: 2px solid #eee; }
.cmdmain { flex: 1; display: flex; flex-direction: column; padding-left: 1px; }
.log { height: 68px; display: flex; border-bottom: 1px solid #8aa08c; }
.log .vscroll { padding-bottom: 6px; }
.log .thumb { margin-top: 6px; }
.lines { flex: 1; }
.lines p { height: 20px; }
.entry { flex: 1; display: flex; align-items: center; }
.entry label { padding-top: 2px; }
.entry input { flex: 1; min-width: 0; border: 0; background: none; height: 20px; font: inherit; }
.entry .hscroll { flex: none; width: 105px; align-self: stretch; padding: 0 29px 0 10px; }
.entry .thumb { margin-right: 16px; }
.ime { position: absolute; left: 1157px; top: 30px; display: flex; gap: 2px; z-index: 3; }
.ime button { width: 35px; height: 39px; border: solid #c4c4c4; border-width: 0 2px 6px; border-radius: 6px; background: #fff; outline: 1px solid #777; outline-offset: -1px; color: #555; font-size: 17px; }
.ime svg { width: 21px; height: 21px; }

/* properties palette */
.props { width: 384px; margin: 6px 0 2px; background: #eee; border-radius: 4px 4px 6px 6px; display: flex; flex-direction: column; overflow: hidden; flex: none; }
.props h2 { height: 26px; background: #a2a2a2; display: flex; align-items: center; gap: 4px; padding-left: 2px; flex: none; }
.pick { display: flex; gap: 4px; padding: 12px 9px 3px 8px; height: 42px; flex: none; }
.pick .combo { flex: 1; height: 27px; }
.pick .combo::after { top: 10px; }
.pickbtns { display: flex; border: 1px solid #888; height: 25px; }
.pickbtns button { width: 24px; border-right: 1px solid #888; }
.pickbtns button:last-child { border: 0; }
.pickbtns svg { width: 18px; height: 18px; }
.plist { flex: 1; min-height: 0; display: flex; margin: 0 2px 12px 10px; }
.sections { flex: 1; overflow: hidden; margin-right: 8px; }
.sections h3 { height: 25px; line-height: 21px; font-weight: bold; padding-left: 4px; border: 1px solid #8a8a8a; background: linear-gradient(#b0b0b0, #989898); position: relative; }
.sections h3::after { content: ""; position: absolute; right: 9px; top: 9px; border: 4px solid transparent; border-bottom: 5px solid #111; border-top: 0; }
.sections table { width: calc(100% - 16px); margin: 0 0 3px 16px; table-layout: fixed; border-spacing: 0; border-left: 1px solid #888; border-right: 1px solid #888; }
.sections th, .sections td { height: 24px; padding: 0 0 1px 4px; line-height: 22px; border-bottom: 1px solid #888; font-weight: normal; text-align: left; white-space: nowrap; overflow: hidden; }
.sections th { width: 160px; }
.sections td { border-left: 1px solid #888; padding-left: 2px; }
.sections .g { background: #cbe8cf; }
.sections td i { display: inline-block; vertical-align: middle; }
.sections td .sw { height: 10px; margin: -4px 5px 0 1px; }
.sections td .ln60 { margin: 0 5px 0 2px; }
.ptrack { width: 11px; background: #b0b0b0; display: flex; align-items: flex-end; }
.ptrack i { width: 11px; height: 14px; background: #ddd; border: 1px solid #999; }

/* status bar */
.status { height: 23px; display: flex; align-items: center; background: linear-gradient(#9a9a9a, #757575); border-bottom: 1px solid #333; flex: none; }
.status output { width: 251px; padding-left: 12px; font: 13px/20px "Liberation Mono", monospace; color: #6a6a6a; white-space: nowrap; flex: none; }
.sbtns, .sright { display: flex; height: 22px; }
.sright { margin-left: auto; }
.status button { width: 22px; background: linear-gradient(#c0c0c0, #959595); border-right: 1px solid #666; }
.status .lit { background: linear-gradient(#d6eaf4, #a8ccdc); }
.status svg { width: 19px; height: 19px; }
.status .ws { width: 64px; font: 14px "Liberation Mono", monospace; gap: 2px; }
.status .nar { width: 13px; }
.gap22 { width: 22px; background: #777; } .gap44 { width: 44px; background: #808080; } .gap14 { width: 13px; background: #a4a4a4; } .gap6 { width: 6px; background: #777; }

/* taskbar */
.taskbar { height: 47px; display: flex; align-items: center; flex: none; gap: 3px;
  background:
    linear-gradient(#9cc8ea 0 1px, #0000 1px),
    radial-gradient(circle at -35px 180px, #0000 180px, #9ccaf4 188px, #9ccaf4 192px, #0000 199px) 1270px 0 / 130px 100% no-repeat,
    linear-gradient(90deg, #1c5c94, #3a98d0 100px, #3a9cd6 500px, #2c84c8 850px, #2876bc 1100px, #2c68b0 1600px, #1a4684 1640px, #1a4280); }
.task { width: 67px; height: 46px; flex: none; border-radius: 3px; }
.task svg { width: 38px; height: 40px; }
.start { width: 68px; padding-right: 4px; }
.start svg { width: 43px; height: 43px; }
.run { border: 1px solid #d4eaf8; background: linear-gradient(135deg, #ffffffa0, #ffffff30); }
.act { background: linear-gradient(135deg, #fffffff0, #ffffff60); box-shadow: 3px 0 0 #78b0dc, 4px 0 0 #e0f0fa; width: 63px; }
.tray { margin-left: auto; display: flex; align-items: center; gap: 10px; color: #fff; padding-right: 1px; }
.tray svg { width: 20px; height: 20px; }
.wh { border-bottom-color: #fff; margin-right: 8px; }
.clock { display: flex; flex-direction: column; align-items: center; width: 83px; line-height: 22px; margin-left: 4px; }
.desk { width: 13px; height: 45px; border: 1px solid #7898c0; background: linear-gradient(135deg, #5c84b4, #234c84); margin-left: -4px; }
```
